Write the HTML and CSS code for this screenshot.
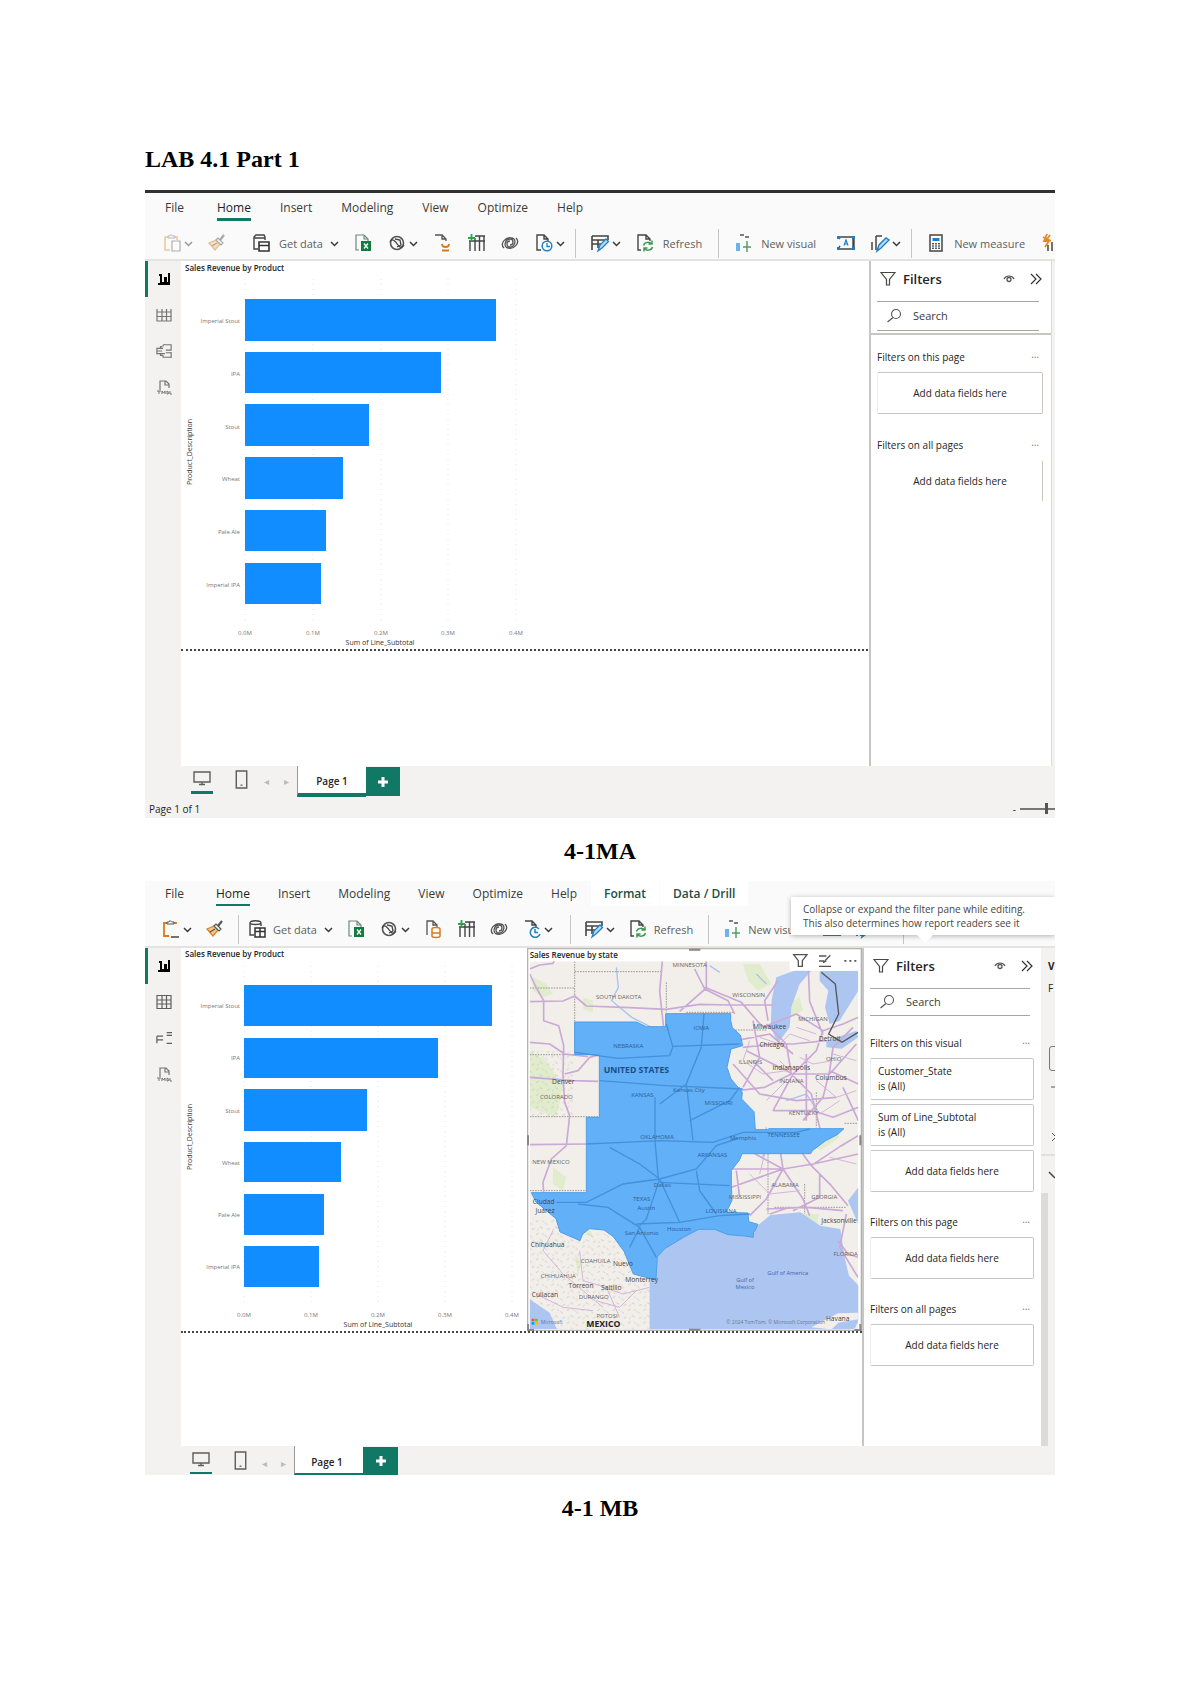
FILE: index.html
```html
<!DOCTYPE html>
<html lang="en">
<head>
<meta charset="utf-8">
<meta name="viewport" content="width=device-width, initial-scale=1">
<title>LAB 4.1 Part 1</title>
<link rel="stylesheet" href="styles.css">
</head>
<body>
<svg class="sprite" aria-hidden="true">
  <symbol id="chev" viewBox="0 0 9 9"><path d="M1 3l3.500 3.500L8 3" fill="none" stroke="currentColor" stroke-width="1.500"/></symbol>
  <symbol id="paste" viewBox="0 0 20 20"><path d="M6 4H3v13h5M13 4h2v3" fill="none" stroke="#e59a45" stroke-width="1.600"/><path d="M6 5V3h2l1-1.500L10.500 3H13v2z" fill="#fff" stroke="#777"/><path d="M10 8h8v10h-8z" fill="#fff" stroke="#666" stroke-width="1.200"/></symbol>
  <symbol id="pasteon" viewBox="0 0 20 20"><path d="M6 4H3v13h5M13 4h2v1" fill="none" stroke="#dc7a1b" stroke-width="1.800"/><path d="M6 5V3h2l1-1.500L10.500 3H13v2z" fill="#fff" stroke="#555"/><path d="M10 18h8" stroke="#444" stroke-width="1.500"/></symbol>
  <symbol id="brush" viewBox="0 0 20 20"><path d="M2 10l7-3 4 4-5 6z" fill="#f5c58b" stroke="#d98324" stroke-width="1.300"/><path d="M5 13l5-3M9 7l2-2 5 5-2 2z" fill="#fff" stroke="#555" stroke-width="1.200"/><path d="M13 7l4-5" stroke="#555" stroke-width="2.200"/></symbol>
  <symbol id="database" viewBox="0 0 20 20"><path d="M7 16H3V4l2-2h8l1 2v3M3 5h11" fill="none" stroke="#444" stroke-width="1.400"/><path d="M8 9h10v9H8zM8 12.500h10" fill="#fff" stroke="#333" stroke-width="1.600"/></symbol>
  <symbol id="data" viewBox="0 0 20 20"><path d="M7 16H3V4c0-3 11-3 11 0v3M3 4c1 2 10 2 11 0" fill="none" stroke="#444" stroke-width="1.400"/><path d="M8 9h10v9H8zM8 12.500h10M13 9V18" fill="#fff" stroke="#333" stroke-width="1.500"/></symbol>
  <symbol id="excel" viewBox="0 0 20 20"><path d="M6 17H3V2h8l4 4v2M11 2v4h4" fill="none" stroke="#6c8a78" stroke-width="1.200"/><path d="M8 8h10v10H8z" fill="#107c41"/><path d="M11 10.500l4 5M15 10.500l-4 5" stroke="#fff" stroke-width="1.300"/></symbol>
  <symbol id="lake" viewBox="0 0 20 20"><circle cx="10" cy="10" r="6.500" fill="none" stroke="#555" stroke-width="1.600"/><path d="M3 9c2-5 6 0 8 3s4 3 6 0M8 6l5 1 1 5-4 2" fill="none" stroke="#444" stroke-width="1.300"/></symbol>
  <symbol id="sql" viewBox="0 0 20 20"><path d="M4 16V2h6l4 4v2M10 2v4h4" fill="none" stroke="#555" stroke-width="1.300"/><path d="M9 10c0-2 8-2 8 0v7c0 2-8 2-8 0zM9 14h8" fill="#fff" stroke="#dc7a1b" stroke-width="1.500"/></symbol>
  <symbol id="sqlopen" viewBox="0 0 20 20"><path d="M3 2h7l4 4v2M10 2v4h4" fill="none" stroke="#555" stroke-width="1.300"/><path d="M10 11c0 4 7 4 7 0M10 17.500h7" fill="none" stroke="#dc7a1b" stroke-width="1.800"/></symbol>
  <symbol id="enter" viewBox="0 0 20 20"><path d="M9 3h10M3 8h16M4 8v10M9 5v13M13.500 3v15M18 3v15" fill="none" stroke="#444" stroke-width="1.400"/><path d="M5.500 1v8M2 5h7" stroke="#2f9e4f" stroke-width="1.800"/></symbol>
  <symbol id="verse" viewBox="0 0 20 20"><path d="M4 15C-1 10 7 3 12 5c5 1 3 9-2 9-4 0-4-6 0-6M16 5c5 5-3 12-8 10-5-1-3-9 2-9 4 0 4 6 0 6" fill="none" stroke="#555" stroke-width="1.300"/></symbol>
  <symbol id="recent" viewBox="0 0 20 20"><path d="M7 17H3V2h7l4 4v2M10 2v4h4" fill="none" stroke="#444" stroke-width="1.400"/><circle cx="13" cy="13" r="4.800" fill="#fff" stroke="#1f7fc4" stroke-width="1.500"/><path d="M13 10v3.500h3" fill="none" stroke="#1f7fc4" stroke-width="1.300"/></symbol>
  <symbol id="recentopen" viewBox="0 0 20 20"><path d="M3 2h7l4 4v2M10 2v4h4" fill="none" stroke="#444" stroke-width="1.400"/><path d="M17 10a5 5 0 1 0 1 5M13 10v3.500h3" fill="none" stroke="#1f7fc4" stroke-width="1.500"/></symbol>
  <symbol id="transform" viewBox="0 0 20 20"><path d="M2 3h16v4M2 7h13M2 11h9M2 3v14M8 7v8" fill="none" stroke="#444" stroke-width="1.600"/><path d="M8 18l2-6 6-6 2.500 2.500-6 6z" fill="#b8dcf5" stroke="#1f7fc4" stroke-width="1.300"/></symbol>
  <symbol id="refresh" viewBox="0 0 20 20"><path d="M6 17H3V2h8l4 4v2M11 2v4h4" fill="none" stroke="#444" stroke-width="1.400"/><path d="M8.500 12.500c1-4 7-4 8.500-1M17.500 14c-1 4-7 4-8.500 1M17 7.500V11h-3.500M9 18.500V15h3.500" fill="none" stroke="#3a9a52" stroke-width="1.500"/></symbol>
  <symbol id="newvis" viewBox="0 0 20 20"><path d="M7 2h4M12 4h4" stroke="#555" stroke-width="1.600"/><path d="M3 10h4v8H3z" fill="#69b3ee"/><path d="M10 14h8M14 8v11" stroke="#5a9c6b" stroke-width="1.500"/></symbol>
  <symbol id="textbox" viewBox="0 0 20 20"><path d="M2 4h16v12H2M2 4l2 2M2 16l2-3M17 4v12" fill="none" stroke="#444" stroke-width="1.400"/><path d="M8 12.500L10 7l2 5.500M9 11h2" fill="none" stroke="#1f7fc4" stroke-width="1.200"/><path d="M1 3h3v3H1zM16 3h3v3h-3zM1 14h3v3H1zM16 14h3v3h-3z" fill="#1f7fc4"/></symbol>
  <symbol id="more" viewBox="0 0 20 20"><path d="M2 9v8M6 3v14M6 3h6" fill="none" stroke="#444" stroke-width="1.500"/><path d="M7 18l2-6 7-7 3 2-8 8z" fill="#b8dcf5" stroke="#1f7fc4" stroke-width="1.400"/></symbol>
  <symbol id="calc" viewBox="0 0 20 20"><path d="M4 2h12v16H4z" fill="#fff" stroke="#444" stroke-width="1.500"/><path d="M6.500 5h7v3h-7z" fill="#1f7fc4"/><path d="M7 10v6M10 10v6M13 10v6" stroke="#444" stroke-width="1.700" stroke-dasharray="1.500 .700"/></symbol>
  <symbol id="quick" viewBox="0 0 20 20"><path d="M6 1l-3 7h5l-4 6M2 4l8 4M9 2L4 9" fill="none" stroke="#e08a2e" stroke-width="1.800"/><path d="M7 12v6M11 9v9" stroke="#444" stroke-width="1.500"/></symbol>
  <symbol id="funnel" viewBox="0 0 16 16"><path d="M1 1.500h14L9.500 8.500V14H6.500V8.500z" fill="none" stroke="#484644" stroke-width="1.200"/></symbol>
  <symbol id="eye" viewBox="0 0 14 10"><path d="M2 5c2-4 8-4 10 0" fill="none" stroke="#555" stroke-width="1.200"/><circle cx="7" cy="5.500" r="2" fill="none" stroke="#555" stroke-width="1.300"/></symbol>
  <symbol id="dbl" viewBox="0 0 12 12"><path d="M1 1l5 5-5 5M6 1l5 5-5 5" fill="none" stroke="#333" stroke-width="1.200"/></symbol>
  <symbol id="mag" viewBox="0 0 16 16"><circle cx="10" cy="6" r="4.500" fill="none" stroke="#555" stroke-width="1.100"/><path d="M7 9.500L1.500 14" stroke="#555" stroke-width="1.200"/></symbol>
  <symbol id="report" viewBox="0 0 16 16"><path d="M3 3h3v8h2V6h3v5h1V2h2v12H2v-2h2V5H3z" fill="#000"/></symbol>
  <symbol id="table" viewBox="0 0 16 16"><path d="M1 1.500h14v13H1zM1 6h14M1 10h14M6 1.500v13M10.500 1.500v13" fill="none" stroke="#605e5c" stroke-width="1.200"/></symbol>
  <symbol id="tableopen" viewBox="0 0 16 16"><path d="M1 2v12h14V2M1 5h14M1 9.500h14M6 2v12M10.500 2v12" fill="none" stroke="#767472" stroke-width="1.200"/></symbol>
  <symbol id="model" viewBox="0 0 18 16"><path d="M8 1h9v6h-6M11 10h6v5h-6M17 9v7M7 3H5v2H1v6h4v2h3M1 8h6M2 5h6M5 11h5M8 1v2M8 13v2h3" fill="none" stroke="#767472" stroke-width="1.300"/></symbol>
  <symbol id="tmdl" viewBox="0 0 16 16"><path d="M4 11V2h6l3 3v4M9 2v4h4" fill="none" stroke="#767472" stroke-width="1.200"/><path d="M1 12h4M3 12v3M6 15v-3l1.500 2L9 12v3M11 12v3h1l1-1.500-2-1.500M14 12v3h2" fill="none" stroke="#767472"/></symbol>
  <symbol id="desktop" viewBox="0 0 18 16"><path d="M1 2h16v10H1zM6 14.500h6M9 12v2" fill="none" stroke="#605e5c" stroke-width="1.400"/></symbol>
  <symbol id="phone" viewBox="0 0 13 20"><path d="M1 1h11v18H1z" fill="none" stroke="#605e5c" stroke-width="1.500"/><path d="M5.500 16h2" stroke="#605e5c" stroke-width="1.400"/></symbol>
</svg>

<main class="page">
  <h1 class="title">LAB 4.1 Part 1</h1>

  <figure class="shot">
    <div class="app app-dark">
      <nav class="menu">
        <a href="#file">File</a><a href="#home" class="on">Home</a><a href="#insert">Insert</a><a href="#modeling">Modeling</a><a href="#view">View</a><a href="#optimize">Optimize</a><a href="#help">Help</a>
      </nav>
      <div class="ribbon">
        <button class="tool off" aria-label="Paste"><svg class="ico"><use href="#paste"/></svg><svg class="chev"><use href="#chev"/></svg></button>
        <button class="tool off" aria-label="Format painter"><svg class="ico"><use href="#brush"/></svg></button>
        <span class="sep first hid"></span>
        <button class="tool"><svg class="ico"><use href="#database"/></svg><span>Get data</span><svg class="chev"><use href="#chev"/></svg></button>
        <button class="tool" aria-label="Excel workbook"><svg class="ico"><use href="#excel"/></svg></button>
        <button class="tool" aria-label="OneLake catalog"><svg class="ico"><use href="#lake"/></svg><svg class="chev"><use href="#chev"/></svg></button>
        <button class="tool" aria-label="SQL Server"><svg class="ico"><use href="#sqlopen"/></svg></button>
        <button class="tool" aria-label="Enter data"><svg class="ico"><use href="#enter"/></svg></button>
        <button class="tool" aria-label="Dataverse"><svg class="ico"><use href="#verse"/></svg></button>
        <button class="tool" aria-label="Recent sources"><svg class="ico"><use href="#recent"/></svg><svg class="chev"><use href="#chev"/></svg></button>
        <span class="sep near"></span>
        <button class="tool" aria-label="Transform data"><svg class="ico"><use href="#transform"/></svg><svg class="chev"><use href="#chev"/></svg></button>
        <button class="tool"><svg class="ico"><use href="#refresh"/></svg><span>Refresh</span></button>
        <span class="sep"></span>
        <button class="tool"><svg class="ico"><use href="#newvis"/></svg><span>New visual</span></button>
        <button class="tool wide" aria-label="Text box"><svg class="ico"><use href="#textbox"/></svg></button>
        <button class="tool" aria-label="More visuals"><svg class="ico"><use href="#more"/></svg><svg class="chev"><use href="#chev"/></svg></button>
        <span class="sep near"></span>
        <button class="tool"><svg class="ico"><use href="#calc"/></svg><span>New measure</span></button>
        <button class="tool" aria-label="Quick measure"><svg class="ico"><use href="#quick"/></svg></button>
      </div>
      <div class="work">
        <div class="rail">
          <button class="on" aria-label="Report view"><svg><use href="#report"/></svg></button>
          <button aria-label="Table view"><svg><use href="#tableopen"/></svg></button>
          <button aria-label="Model view"><svg><use href="#model"/></svg></button>
          <button aria-label="TMDL view"><svg><use href="#tmdl"/></svg></button>
        </div>
        <div class="canvas tall">
          <div class="visuals">
            <svg class="chart" width="350" height="388" viewBox="0 0 350 388" role="img" aria-label="Sales Revenue by Product">
              <text class="ct" x="4" y="10">Sales Revenue by Product</text>
              <path class="grid" d="M64 18V362M132 18V362M200 18V362M267 18V362M335 18V362"/>
              <g class="bars"><rect x="64" y="38" width="251" height="42"/><rect x="64" y="91" width="196" height="41"/><rect x="64" y="143" width="124" height="42"/><rect x="64" y="196" width="98" height="42"/><rect x="64" y="249" width="81" height="41"/><rect x="64" y="302" width="76" height="41"/></g>
              <g class="cat"><text x="59" y="62">Imperial Stout</text><text x="59" y="115">IPA</text><text x="59" y="168">Stout</text><text x="59" y="220">Wheat</text><text x="59" y="273">Pale Ale</text><text x="59" y="326">Imperial IPA</text></g>
              <g class="tick"><text x="64" y="374">0.0M</text><text x="132" y="374">0.1M</text><text x="200" y="374">0.2M</text><text x="267" y="374">0.3M</text><text x="335" y="374">0.4M</text></g>
              <text class="axis" x="199" y="384">Sum of Line_Subtotal</text>
              <text class="axis" transform="translate(11 191) rotate(-90)">Product_Description</text>
            </svg>
          </div>
        </div>
        <aside class="pane">
          <header class="phead"><svg class="fun"><use href="#funnel"/></svg><h2>Filters</h2><button aria-label="Show pane to readers"><svg class="eye"><use href="#eye"/></svg></button><button aria-label="Collapse pane"><svg class="dbl"><use href="#dbl"/></svg></button></header>
          <label class="search"><svg><use href="#mag"/></svg><input type="search" placeholder="Search" aria-label="Search"></label>
          <hr>
          <section><div class="sh"><h3>Filters on this page</h3><button aria-label="More options">…</button></div><div class="card">Add data fields here</div></section>
          <section><div class="sh"><h3>Filters on all pages</h3><button aria-label="More options">…</button></div><div class="card bare">Add data fields here</div></section>
        </aside>
        <div class="edge"></div>
      </div>
      <div class="pages">
        <button class="view on" aria-label="Desktop layout"><svg class="desk"><use href="#desktop"/></svg></button>
        <button class="view" aria-label="Mobile layout"><svg class="phone"><use href="#phone"/></svg></button>
        <button class="step" aria-label="Previous page">◂</button><button class="step" aria-label="Next page">▸</button>
        <button class="tab">Page 1</button><button class="add" aria-label="New page"><svg viewBox="0 0 12 12"><path d="M6 1v10M1 6h10" stroke="#fff" stroke-width="3"/></svg></button>
      </div>
      <div class="status"><span>Page 1 of 1</span><span class="minus">-</span><input type="range" min="0" max="100" value="50" aria-label="Zoom"></div>
    </div>
    <figcaption>4-1MA</figcaption>
  </figure>

  <figure class="shot">
    <div class="app second">
      <nav class="menu">
        <a href="#file">File</a><a href="#home" class="on">Home</a><a href="#insert">Insert</a><a href="#modeling">Modeling</a><a href="#view">View</a><a href="#optimize">Optimize</a><a href="#help">Help</a><a href="#format" class="ctx">Format</a><a href="#drill" class="ctx">Data / Drill</a>
      </nav>
      <div class="ribbon">
        <button class="tool" aria-label="Paste"><svg class="ico"><use href="#pasteon"/></svg><svg class="chev"><use href="#chev"/></svg></button>
        <button class="tool" aria-label="Format painter"><svg class="ico"><use href="#brush"/></svg></button>
        <span class="sep first"></span>
        <button class="tool"><svg class="ico"><use href="#data"/></svg><span>Get data</span><svg class="chev"><use href="#chev"/></svg></button>
        <button class="tool" aria-label="Excel workbook"><svg class="ico"><use href="#excel"/></svg></button>
        <button class="tool" aria-label="OneLake catalog"><svg class="ico"><use href="#lake"/></svg><svg class="chev"><use href="#chev"/></svg></button>
        <button class="tool" aria-label="SQL Server"><svg class="ico"><use href="#sql"/></svg></button>
        <button class="tool" aria-label="Enter data"><svg class="ico"><use href="#enter"/></svg></button>
        <button class="tool" aria-label="Dataverse"><svg class="ico"><use href="#verse"/></svg></button>
        <button class="tool" aria-label="Recent sources"><svg class="ico"><use href="#recentopen"/></svg><svg class="chev"><use href="#chev"/></svg></button>
        <span class="sep near"></span>
        <button class="tool" aria-label="Transform data"><svg class="ico"><use href="#transform"/></svg><svg class="chev"><use href="#chev"/></svg></button>
        <button class="tool"><svg class="ico"><use href="#refresh"/></svg><span>Refresh</span></button>
        <span class="sep"></span>
        <button class="tool"><svg class="ico"><use href="#newvis"/></svg><span>New visual</span></button>
        <button class="tool wide" aria-label="Text box"><svg class="ico"><use href="#textbox"/></svg></button>
        <button class="tool" aria-label="More visuals"><svg class="ico"><use href="#more"/></svg><svg class="chev"><use href="#chev"/></svg></button>
        <span class="sep near"></span>
      </div>
      <div class="tip" role="tooltip">Collapse or expand the filter pane while editing.<br>This also determines how report readers see it</div>
      <div class="work">
        <div class="rail">
          <button class="on" aria-label="Report view"><svg><use href="#report"/></svg></button>
          <button aria-label="Table view"><svg><use href="#table"/></svg></button>
          <button aria-label="Model view"><svg viewBox="0 0 18 16"><path d="M1 6v8M1 6h7M1 10h7M12 2h6M12 5h6M12 14h6" fill="none" stroke="#605e5c" stroke-width="1.400"/></svg></button>
          <button aria-label="TMDL view"><svg><use href="#tmdl"/></svg></button>
        </div>
        <div class="canvas">
          <div class="visuals">
            <svg class="chart" width="346" height="383" viewBox="0 0 346 383" role="img" aria-label="Sales Revenue by Product">
              <text class="ct" x="4" y="9">Sales Revenue by Product</text>
              <path class="grid" d="M63 18V356M130 18V356M197 18V356M264 18V356M331 18V356"/>
              <g class="bars"><rect x="63" y="37" width="248" height="41"/><rect x="63" y="90" width="194" height="40"/><rect x="63" y="141" width="123" height="42"/><rect x="63" y="194" width="97" height="40"/><rect x="63" y="246" width="80" height="41"/><rect x="63" y="298" width="75" height="41"/></g>
              <g class="cat"><text x="59" y="60">Imperial Stout</text><text x="59" y="112">IPA</text><text x="59" y="165">Stout</text><text x="59" y="217">Wheat</text><text x="59" y="269">Pale Ale</text><text x="59" y="321">Imperial IPA</text></g>
              <g class="tick"><text x="63" y="369">0.0M</text><text x="130" y="369">0.1M</text><text x="197" y="369">0.2M</text><text x="264" y="369">0.3M</text><text x="331" y="369">0.4M</text></g>
              <text class="axis" x="197" y="379">Sum of Line_Subtotal</text>
              <text class="axis" transform="translate(11 189) rotate(-90)">Product_Description</text>
            </svg>
            <svg class="map" width="335" height="383" viewBox="22 22 1005 1149" role="img" aria-label="Sales Revenue by state">
              <defs><clipPath id="frame"><path d="M30 62H1016V1166H30z"/></clipPath>
              <pattern id="hills" width="46" height="38" patternUnits="userSpaceOnUse"><path d="M3 8l8-5M14 22l9 5M30 10l7 6M36 31l8-4M6 33l5-5M22 4l3 5" stroke="#c9c6bf" stroke-width="2.500"/></pattern></defs>
              <path d="M22 22H1027V1171H22z" fill="#fff"/>
              <g clip-path="url(#frame)">
                <path d="M30 62H1016V1166H30z" fill="#f2efea"/>
                <g fill="#dcebc4"><path d="M40 110l40 20 20 30-30 10-30-20zM30 330l50 30 50 80-20 90-80-30zM190 170l30 10 0 35-30-10zM670 70l50 0 35 60-40 20-30-30zM800 190l40-20 10 40-40 20zM100 680l40 30-10 40-30-20zM880 610l60-40 20 20-60 40zM840 820l60 0-10 30zM160 870l50-10 10 30zM165 940l20 20-10 50z" opacity=".8"/></g>
                <path d="M30 330h130v200H30zM30 840L130 830 190 880 290 880 410 1010 390 1166H30z" fill="url(#hills)"/>
                <g fill="#adc6f1"><path d="M410 1003l2-70 60-50 60-30 80 10 80 10 60-50 90-8 60 40 60 10 14 90 12 50 48 50v40l-30 68-70 20-150 23H390V1010z"/><path d="M770 110l60-22 45 2-35 40-25 70-5 60-35 48-22-50 3-80zM900 90h116v60l-56 90-30 10-14-50 10-50-26-30zM920 300l90-30 6 20-50 34-46-4zM985 780l31-40v110zM30 1076l60 40 22 50H30z"/></g>
                <path d="M875 1160l80-42 61-2v20l-60 10-20 20z" fill="#f2efea"/>
                <g fill="none" stroke="#a8c3ec" stroke-width="4"><path d="M290 80l6 60-20 40 60 50 60 30M740 130l-30-30M600 95l-30-20M800 480l60-20 40 60M740 560l-10 90"/></g>
                <g fill="none" stroke="#8d8a87" stroke-width="2.500" stroke-dasharray="5 3"><path d="M165 62V340M165 93H425M30 142H165M30 342H165M30 528H240M440 125V215M30 750H200M745 640V820M855 730V820M740 268H640M890 455V560M975 548h41M765 800H980M500 215H640"/></g>
                <g fill="none" stroke="#cba9d6" stroke-width="5" stroke-linejoin="round"><path d="M30 85l30-12 40-5 4-10M30 100l22 45 20 35v60l45 15 15 60-2 90 5 80 15 40-10 90-45 40-25 70 5 80M30 183l100-2 35-15 35 30 130 5 110 5 100-15 90 2h130M30 305l60 5 45 30 70 8M135 400l40-10 35-40 30-8M30 410l130 10 75 2M30 612l170-2M428 62l-8 90 12 110M560 62v80l-80 70M555 140l110 45 60 70M555 145l-30-60M555 145l70 35 20 40M650 300l100-20 70 60M700 240l20 110-50 90M680 330l140 70 110 0 80-90M745 240l-10-60 40-60M865 62l5 120 40 100M910 270l-80-50-100 40M910 270l60-20 46-20M910 270l-20 60-70 70-60 110M815 400l60 60 30 120M815 400l-80 40-80 10M930 390l86 40M930 390l-20 80-60 70M670 320l90-10 60 0 100-10M720 460l110 20 120-10M815 400l-15-90-60-60M930 390l10-70 60-60M760 510l120 0 60 20 76-30M670 620l120 65 90-15 136-30M790 685l-10-65M790 685l-50 90-50 50M790 685l60 90 20 50M875 675l-40-55M875 675l60 60 50 60M875 675l90-60 50-30M635 685h155M660 770l-10-80M635 740l155-55M740 805l120-5 110 10M980 820l-20 100 55 90M955 900l30 40 30 10M900 700l0 70-80 40M700 360l60 60M860 340v200M640 370l80 90M970 440l46 100M750 820l60-20"/></g>
                <g fill="none" stroke="#d3b5d9" stroke-width="3"><path d="M100 870l-30 60 60 70 60 50 60 50M250 1040l60 20 80-20M180 930l10 90 70 20 40 90M230 1080l70 20 50-50M50 1060l80 40 90 10M690 300l-20 60 60 40 70-10M720 290l60 20 30-30 60 20M840 350l40 20 60-10M740 480l60-60M890 420l60 50 60-20M830 260l60 20M700 560l40 60-20 80M930 650l80 20M690 700l60 60 90-10M940 340l70 20M900 520l60-40M780 360l40 40"/></g>
                <path d="M165 244H350l30 14h40l18 0V219H633l0 20 5 22 24 22 7 32-35 10-12 55 12 35 34 40-2 20 37 38 4 54h40v-3H973l-20 18-35 18-40 30-5 9H667l-8 20-24 30 0 45 2 45-17 36 65 2 2 26 28 8-8 17-6 8 0 14-26-4-50-4-40-16-48 0-42 22-60 36-22 24-4 70-68-18-28-68-32-44-28-20-44-4-20 16-8 20-60-26-12-40-60-50-14-28H200V530H239V342H165z" fill="#62b0f8" stroke="#4f9ee8" stroke-width="3"/>
                <g fill="none" stroke="#4390dc" stroke-width="4"><path d="M553 219l-8 100-45 110 20 170M165 335l130 18 155-8 10-28 200-7M239 420l200 15 230 10M406 470v130l10 115M200 610l110-5 110-5 160 5 90-30 160 0 40-10M420 715l-110 15-110 55-90 0M420 715l60 130-130 5M420 715l-40 120-20 20M175 790l90 10 95 60M480 845l120-20 90-5M420 715l110-30 60-70 60-20M530 690l10 60 50 70M270 620l90 50 60 45M500 430l-80 60M510 540l120-60 30-40M420 725l210 10M360 860l-30 60M360 860l50 90M440 250l20 70"/></g>
                <g fill="none" stroke="#555" stroke-width="4"><path d="M905 95l42 35 10 90-30 60 40 25 48-30"/></g>
                <g class="st"><text x="510" y="80">MINNESOTA</text><text x="297" y="174">SOUTH DAKOTA</text><text x="687" y="168">WISCONSIN</text><text x="880" y="240">MICHIGAN</text><text x="692" y="370">ILLINOIS</text><text x="815" y="428">INDIANA</text><text x="942" y="362">OHIO</text><text x="852" y="522">KENTUCKY</text><text x="110" y="474">COLORADO</text><text x="94" y="669">NEW MEXICO</text><text x="676" y="774">MISSISSIPPI</text><text x="796" y="738">ALABAMA</text><text x="914" y="774">GEORGIA</text><text x="978" y="946">FLORIDA</text><text x="228" y="966">COAHUILA</text><text x="116" y="1012">CHIHUAHUA</text><text x="222" y="1076">DURANGO</text><text x="262" y="1132">POTOSI</text></g>
                <g class="st in"><text x="545" y="267">IOWA</text><text x="326" y="321">NEBRASKA</text><text x="368" y="470">KANSAS</text><text x="597" y="492">MISSOURI</text><text x="412" y="595">OKLAHOMA</text><text x="578" y="648">ARKANSAS</text><text x="792" y="588">TENNESSEE</text><text x="366" y="780">TEXAS</text><text x="604" y="818">LOUISIANA</text><text x="428" y="740">Dallas</text><text x="508" y="455">Kansas City</text><text x="670" y="598">Memphis</text><text x="380" y="808">Austin</text><text x="366" y="882">San Antonio</text><text x="478" y="870">Houston</text></g>
                <g class="city"><text x="131" y="430">Denver</text><text x="815" y="388">Indianapolis</text><text x="934" y="418">Columbus</text><text x="750" y="266">Milwaukee</text><text x="756" y="320">Chicago</text><text x="930" y="300">Detroit</text><text x="72" y="790">Ciudad</text><text x="76" y="818">Juárez</text><text x="84" y="918">Chihuahua</text><text x="366" y="1024">Monterrey</text><text x="275" y="1048">Saltillo</text><text x="184" y="1042">Torreon</text><text x="958" y="848">Jacksonville</text><text x="954" y="1140">Havana</text><text x="310" y="976">Nuevo</text><text x="76" y="1070">Culiacan</text></g>
                <g class="sea"><text x="676" y="1024">Gulf of</text><text x="676" y="1044">Mexico</text><text x="804" y="1002">Gulf of America</text></g>
                <text class="us" x="350" y="398">UNITED STATES</text><text class="mx" x="251" y="1160">MEXICO</text>
                <path d="M36 1134h8v8h-8z" fill="#f25022"/><path d="M46 1134h8v8h-8z" fill="#7fba00"/><path d="M36 1144h8v8h-8z" fill="#00a4ef"/><path d="M46 1144h8v8h-8z" fill="#ffb900"/>
                <text class="ms" x="96" y="1150">Microsoft</text><text class="ms" x="768" y="1150">© 2024 TomTom, © Microsoft Corporation</text>
              </g>
              <path d="M810 34H1020V90H810z" fill="#fff"/>
              <path d="M822 42h40l-14 18v17h-12V60zM898 46h22M898 61h16M898 77h36M916 60l16-16M910 66l10-5" fill="none" stroke="#555" stroke-width="4"/><path d="M974 58h6v5h-6zM989 58h6v5h-6zM1004 58h6v5h-6z" fill="#555"/>
              <text class="mt" x="30" y="51">Sales Revenue by state</text>
              <path d="M24 24H1025V1169H24z" fill="none" stroke="#b5b3b1" stroke-width="4"/>
              <path d="M508 27h34M508 1167h34M25 584v30M1022 584v30M25 1150v18h18M1022 1150v18h-18" fill="none" stroke="#8a8886" stroke-width="6"/>
            </svg>
          </div>
        </div>
        <aside class="pane">
          <header class="phead"><svg class="fun"><use href="#funnel"/></svg><h2>Filters</h2><button aria-label="Show pane to readers"><svg class="eye"><use href="#eye"/></svg></button><button aria-label="Collapse pane"><svg class="dbl"><use href="#dbl"/></svg></button></header>
          <label class="search"><svg><use href="#mag"/></svg><input type="search" placeholder="Search" aria-label="Search"></label>
          <section><div class="sh"><h3>Filters on this visual</h3><button aria-label="More options">…</button></div>
            <div class="card field">Customer_State<br>is (All)</div><div class="card field">Sum of Line_Subtotal<br>is (All)</div><div class="card">Add data fields here</div></section>
          <section><div class="sh"><h3>Filters on this page</h3><button aria-label="More options">…</button></div><div class="card">Add data fields here</div></section>
          <section><div class="sh"><h3>Filters on all pages</h3><button aria-label="More options">…</button></div><div class="card">Add data fields here</div></section>
        </aside>
        <div class="viz"><b>V</b><span>F</span><i></i><svg viewBox="0 0 14 80"><path d="M10 2h4M11 48l4 4-4 4" fill="none" stroke="#555"/><path d="M0 70h14" stroke="#d0cecc"/></svg><svg class="dn" viewBox="0 0 14 12"><path d="M8 3l6 6" stroke="#444" stroke-width="1.500"/></svg><div class="scroll"></div></div>
      </div>
      <div class="pages">
        <button class="view on" aria-label="Desktop layout"><svg class="desk"><use href="#desktop"/></svg></button>
        <button class="view" aria-label="Mobile layout"><svg class="phone"><use href="#phone"/></svg></button>
        <button class="step" aria-label="Previous page">◂</button><button class="step" aria-label="Next page">▸</button>
        <button class="tab">Page 1</button><button class="add" aria-label="New page"><svg viewBox="0 0 12 12"><path d="M6 1v10M1 6h10" stroke="#fff" stroke-width="3"/></svg></button>
      </div>
    </div>
    <figcaption>4-1 MB</figcaption>
  </figure>
</main>
</body>
</html>
```
FILE: styles.css
```css
* { box-sizing: border-box; }
body { margin: 0; background: #fff; color: #252423; font-family: "Open Sans", "Noto Sans", sans-serif; }
.sprite { display: none; }
.page { padding: 145px 145px 160px; }
.title, figcaption { margin: 0; font: bold 24px/28px "Liberation Serif", serif; color: #000; }
figcaption { text-align: center; }
.shot { margin: 17px 0 0; }
.shot figcaption { margin-top: 19px; }
.shot + .shot { margin-top: 16px; }
button { margin: 0; padding: 0; border: 0; background: none; font: inherit; color: inherit; }
svg { display: block; flex: none; }

.app { position: relative; overflow: hidden; background: #f3f2f1; }
.app-dark { border-top: 3px solid #323130; }

.menu { display: flex; gap: 29px; height: 28px; padding-left: 20px; background: #fafafa; }
.menu a { height: 28px; font-size: 12px; line-height: 29px; color: #3b3a39; text-decoration: none; }
.menu a:first-child { margin-right: 4px; }
.menu .on { border-bottom: 3px solid #117865; color: #201f1e; }
.menu .ctx { margin: 0 -13px; padding: 0 13px; background: #fff; color: #1f4e46; font-weight: 600; }
.ribbon { display: flex; align-items: center; gap: 14px; height: 40px; padding: 6px 0 0 17px; border-bottom: 2px solid #e4e3e2; background: #fafafa; font-size: 11px; white-space: nowrap; overflow: hidden; }
.tool { display: flex; flex: none; align-items: center; color: #605e5c; }
.tool span { margin: 0 2px 0 8px; }
.tool span + .chev { margin-left: 5px; }
.wide { margin-left: 4px; }
.ico { width: 20px; height: 20px; }
.chev { width: 9px; height: 9px; margin-left: 2px; color: #3b3a39; }
.off { opacity: .5; }
.sep { flex: none; width: 1px; height: 29px; background: #c8c6c4; }
.first { margin-right: -5px; }
.hid { visibility: hidden; }
.near { margin-left: -4px; }

.work { display: flex; background: #fff; }
.rail { flex: none; width: 36px; background: #f3f2f1; }
.rail button { display: flex; align-items: center; justify-content: center; width: 36px; height: 36px; border-left: 3px solid transparent; padding-right: 1px; }
.rail .on { border-color: #117865; }
.rail svg { width: 16px; height: 16px; }
.canvas { flex: 1; min-width: 0; min-height: 498px; }
.canvas.tall { min-height: 505px; }
.visuals { display: flex; justify-content: space-between; margin-right: 1px; border-bottom: 2px dotted #444; }
.second .visuals { margin-right: 0; }
.ct, .mt { font-size: 8px; font-weight: 600; fill: #252423; }
.mt { font-size: 24px; }
.grid { stroke: #e6e6e6; stroke-dasharray: 1 4; }
.bars { fill: #118dff; }
.cat, .tick { font-size: 6px; fill: #777; text-anchor: end; }
.tick { text-anchor: middle; }
.axis { font-size: 7px; fill: #333; text-anchor: middle; }
.st { font-size: 18px; fill: #666; text-anchor: middle; }
.in { fill: #2c5f95; }
.city { font-size: 20px; fill: #444; text-anchor: middle; }
.sea { font-size: 17px; fill: #4361b0; text-anchor: middle; }
.us { font-size: 26px; font-weight: 700; fill: #1b4d86; text-anchor: middle; }
.mx { font-size: 26px; font-weight: 700; fill: #222; text-anchor: middle; }
.ms { font-size: 15px; fill: #6a7690; text-anchor: middle; }

.pane { flex: none; width: 182px; border-left: 2px solid #c8c6c4; padding: 0 8px 0 6px; font-size: 10px; }
.phead { display: flex; align-items: center; height: 36px; padding: 0 1px 0 3px; }
.phead h2 { flex: 1; margin: 0 0 0 7px; font-size: 13px; line-height: 18px; font-weight: 600; }
.fun { width: 16px; height: 16px; }
.eye { width: 14px; height: 10px; }
.dbl { width: 12px; height: 12px; margin-left: 14px; }
.search { display: flex; align-items: center; height: 30px; margin: 4px 4px 0 0; padding-left: 9px; border: solid #a8a6a4; border-width: 1px 0; }
.search svg { width: 16px; height: 16px; }
.search input { flex: 1; min-width: 0; margin-left: 11px; padding: 0; border: 0; outline: 0; background: none; font: 11px/16px "Open Sans", sans-serif; color: #252423; }
.search input::placeholder { color: #3b3a39; opacity: 1; }
.pane hr { margin: 2px -8px 12px -6px; border: 0; border-top: 2px solid #c8c6c4; }
.sh { display: flex; align-items: flex-start; justify-content: space-between; height: 24px; margin-bottom: 1px; padding-right: 4px; }
.sh h3 { margin: 0; font-size: 10px; line-height: 20px; font-weight: 400; }
.sh button { line-height: 14px; color: #777; }
.card { display: flex; align-items: center; justify-content: center; height: 42px; margin-bottom: 21px; border: 1px solid #c8c6c4; border-left-color: #eee; border-radius: 2px; line-height: 15px; }
.bare { border-color: transparent #c8c6c4 transparent transparent; }
.edge { width: 4px; border-left: 1px solid #ddd; background: #f3f2f1; }

.pages { display: flex; align-items: flex-start; height: 31px; padding-left: 46px; }
.view { display: flex; justify-content: center; width: 22px; height: 28px; padding-top: 4px; }
.view + .view { margin-left: 17px; }
.view.on { border-bottom: 3px solid #117865; }
.desk { width: 18px; height: 16px; }
.phone { width: 13px; height: 19px; }
.step { width: 20px; margin-top: 5px; font-size: 10px; line-height: 20px; color: #bbb; }
.view + .step { margin-left: 4px; }
.tab { width: 69px; height: 31px; margin-left: 1px; padding: 3px 6px 0 0; border-left: 1px solid #999; border-bottom: 4px solid #117865; background: #fff; font-size: 10px; font-weight: 600; line-height: 24px; }
.app-dark .tab { padding-right: 0; }
.add { display: grid; place-items: center; width: 34px; height: 29px; margin-top: 1px; background: #117865; }
.add svg { width: 12px; height: 12px; }
.status { display: flex; align-items: center; height: 21px; padding: 2px 0 0 4px; font-size: 10px; line-height: 16px; }
.minus { margin-left: auto; }
.status input { appearance: none; width: 52px; height: 12px; margin: 0 -17px 0 4px; background: linear-gradient(#777, #777) center / 100% 2px no-repeat; }
.status input::-webkit-slider-thumb { appearance: none; width: 3px; height: 11px; background: #555; }

.second .menu { gap: 28px; height: 25px; }
.second .menu a { height: 25px; line-height: 26px; }
.second .menu .on { border-bottom-width: 2px; }
.second .menu .ctx { margin-left: -14px; }
.second .ribbon { gap: 13px; height: 42px; padding-top: 6px; padding-left: 16px; }
.second .tool span { margin-left: 6px; }
.second .near { margin-left: 4px; }
.second .pane { width: 179px; padding-right: 7px; }
.second .search { margin-bottom: 17px; height: 28px; }
.second .card { margin-bottom: 20px; }
.second .field { justify-content: flex-start; margin-bottom: 4px; padding-left: 7px; }
.second .pages { height: 29px; padding-left: 45px; }
.second .view { height: 28px; padding-top: 5px; }
.second .view.on { border-bottom-width: 2px; }
.second .step { width: 19px; margin-top: 7px; }
.second .tab { height: 29px; padding: 4px 4px 0 0; border-bottom-width: 2px; }
.second .add { width: 35px; height: 28px; }

.tip { position: absolute; top: 16px; right: 0; width: 264px; padding: 5px 0 5px 12px; background: #fff; box-shadow: 0 1px 5px rgba(0, 0, 0, .3); font-size: 10px; line-height: 14px; white-space: nowrap; color: #484644; }
.tip::after { content: ""; position: absolute; left: 126px; top: 38px; border: 8px solid transparent; border-top-color: #fff; border-bottom: 0; }
.viz { display: flex; flex-direction: column; flex: none; width: 14px; overflow: hidden; background: #f3f2f1; white-space: nowrap; padding-top: 7px; }
.viz b, .viz span { margin-left: 7px; font-size: 10px; line-height: 22px; }
.viz i { width: 20px; height: 25px; margin: 47px 0 0 8px; border: 1px solid #777; border-radius: 3px; }
.viz svg { width: 14px; height: 80px; margin-top: 14px; }
.viz .dn { height: 12px; margin-top: 4px; }
.scroll { flex: 1; margin-top: 12px; border-left: 7px solid #dddbd9; }
```
